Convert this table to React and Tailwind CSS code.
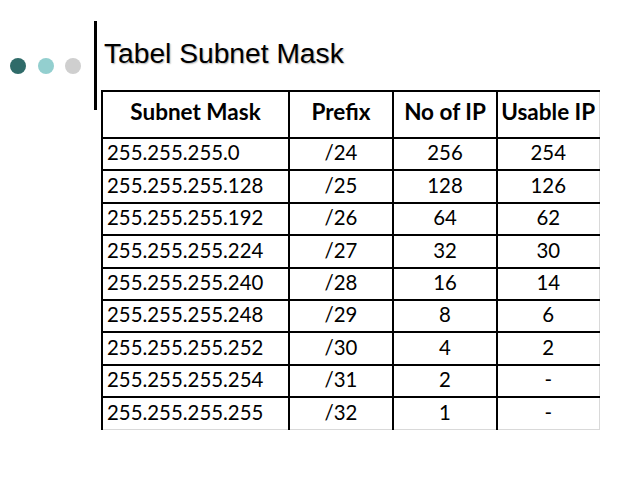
const ROWS = [
  ['255.255.255.0', '/24', '256', '254'],
  ['255.255.255.128', '/25', '128', '126'],
  ['255.255.255.192', '/26', '64', '62'],
  ['255.255.255.224', '/27', '32', '30'],
  ['255.255.255.240', '/28', '16', '14'],
  ['255.255.255.248', '/29', '8', '6'],
  ['255.255.255.252', '/30', '4', '2'],
  ['255.255.255.254', '/31', '2', '-'],
  ['255.255.255.255', '/32', '1', '-'],
];

export default function App() {
  return (
    <div className="w-[638px] h-[478px] bg-white flex">
      {/* Bullets */}
      <div className="w-[94px] pl-[10px] pt-[58px] flex gap-[11.5px]">
        <span className="block w-4 h-4 rounded-full bg-[#2f6b69]" />
        <span className="block w-4 h-4 rounded-full bg-[#93cfcf]" />
        <span className="block w-4 h-4 rounded-full bg-[#cfcfcf]" />
      </div>

      {/* Divider */}
      <div className="w-[3px] h-[89px] mt-[21px] bg-black" />

      <div className="ml-[4px] flex flex-col">
        <h1 className="mt-[39px] pl-[3px] text-[28.2px] leading-[28px] text-black font-['Liberation_Sans',Arial,sans-serif] [text-shadow:1px_1px_1.5px_rgba(0,0,0,0.3)]">
          Tabel Subnet Mask
        </h1>

        <table className="mt-[23px] border-collapse table-fixed font-['Lato',sans-serif] text-[20.4px] text-black">
          <colgroup>
            <col className="w-[187px]" />
            <col className="w-[104px]" />
            <col className="w-[104px]" />
            <col className="w-[102px]" />
          </colgroup>
          <thead>
            <tr className="h-[47px] text-[22.5px]">
              <th className="border-2 border-black font-bold pb-[6px]">Subnet Mask</th>
              <th className="border-2 border-black font-bold pb-[6px]">Prefix</th>
              <th className="border-2 border-black font-bold pb-[6px]">No of IP</th>
              <th className="border-2 border-black border-r border-r-[#d9d9d9] font-bold pb-[6px] whitespace-nowrap">Usable IP</th>
            </tr>
          </thead>
          <tbody>
            {ROWS.map((r, i) => {
              const last = i === ROWS.length - 1;
              const b = last ? 'border-b border-b-[#d9d9d9]' : '';
              return (
                <tr key={r[0]} className="h-[32.4px]">
                  <td className={`border-2 border-black pl-[4px] pb-[3px] leading-none ${b}`}>{r[0]}</td>
                  <td className={`border-2 border-black pb-[3px] text-center leading-none ${b}`}>{r[1]}</td>
                  <td className={`border-2 border-black pb-[3px] text-center leading-none ${b}`}>{r[2]}</td>
                  <td className={`border-2 border-black border-r border-r-[#d9d9d9] pb-[3px] text-center leading-none ${b}`}>{r[3]}</td>
                </tr>
              );
            })}
          </tbody>
        </table>
      </div>
    </div>
  );
}
